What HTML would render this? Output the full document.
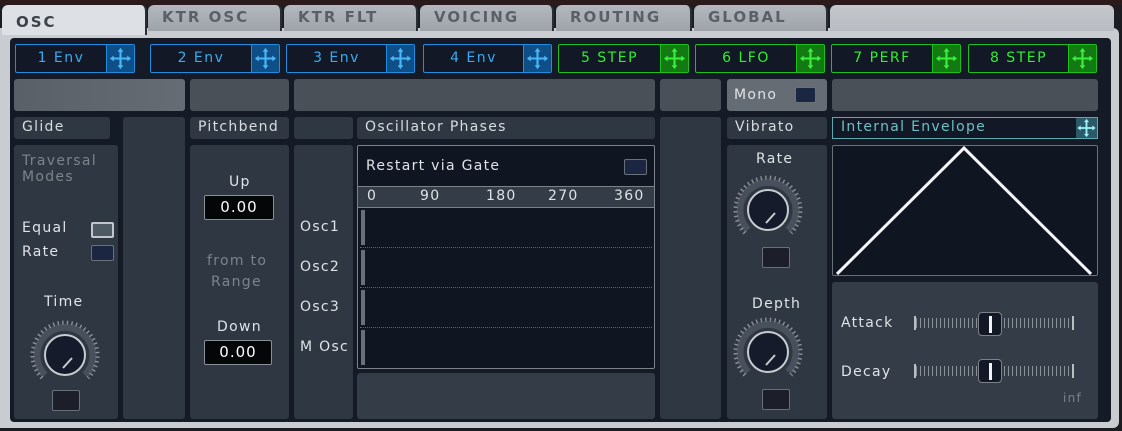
<!DOCTYPE html>
<html><head><meta charset="utf-8"><style>
*{margin:0;padding:0;box-sizing:border-box}
body{width:1122px;height:431px;background:#1b1d22;position:relative;overflow:hidden;font-family:"DejaVu Sans","Liberation Sans",sans-serif;}
.a{position:absolute}
.tab{position:absolute;top:5px;height:26px;background:linear-gradient(#b4b8be,#9ea3aa);border-radius:6px 6px 0 0;color:#5a6068;font-weight:bold;font-size:15px;letter-spacing:2px;padding:3px 0 0 14px;border-right:2px solid #2a2e34}
.p{position:absolute;background:#2f3742;border-radius:3px}
.lbl{position:absolute;background:#2f3742;border-radius:3px;color:#d8dce0;font-size:14px;letter-spacing:1.3px;padding:2px 0 0 8px}
.mod{position:absolute;top:44px;height:29px;border:1px solid;border-radius:2px;background:#121826;font-size:14px;letter-spacing:1.5px;text-align:center;line-height:27px}
.mod .ic{position:absolute;right:0;top:0;width:28px;height:27px}
.b{border-color:#1e8ce0;color:#3aaaf0}.b .ic{background:#0f4f88;border-left:1px solid #1e8ce0}
.g{border-color:#1cc01c;color:#2ef02e}.g .ic{background:#137a13;border-left:1px solid #1cc01c}
.t{color:#dfe3e7;font-size:14px;letter-spacing:1.3px;position:absolute}
.box{position:absolute;background:#050608;border:1px solid #8a9098;border-radius:2px;color:#fff;font-size:15px;letter-spacing:1px;text-align:center;line-height:22px}
.sq{position:absolute;width:28px;height:21px;background:#1c1f2a;border:1px solid #6a7078;border-radius:2px}
</style></head><body>
<div class="a" style="left:0;top:0;width:1122px;height:5px;background:#2a1a1c"></div>
<div class="a" style="left:0;top:28px;width:1119px;height:400px;background:#c9cdd2;border-radius:0 6px 6px 0"></div>
<div class="tab" style="left:2px;width:145px;height:30px;background:#dde0e4;color:#3c424a;padding-top:8px">OSC</div>
<div class="tab" style="left:148px;width:134px">KTR OSC</div>
<div class="tab" style="left:284px;width:134px">KTR FLT</div>
<div class="tab" style="left:420px;width:134px">VOICING</div>
<div class="tab" style="left:556px;width:136px">ROUTING</div>
<div class="tab" style="left:694px;width:134px">GLOBAL</div>
<div class="tab" style="left:830px;width:284px;background:linear-gradient(#c4c8cd,#b8bcc2);border-right:none"></div>
<div class="a" style="left:10px;top:38px;width:1101px;height:384px;background:#151b26;border-radius:4px"></div>

<svg width="0" height="0" style="position:absolute"><defs>
<g id="mv"><path d="M0 -9V9M-9 0H9" stroke="currentColor" stroke-width="2.2"/><path d="M0 -11l-3 4h6zM0 11l-3 -4h6zM-11 0l4 -3v6zM11 0l-4 -3v6z" fill="currentColor"/></g>
<g id="knob">
<path d="M-20 20A28 28 0 1 1 20 20" fill="none" stroke="#47505b" stroke-width="7"/>
<path d="M-23 23A32.5 32.5 0 1 1 23 23" fill="none" stroke="#8a9199" stroke-width="4" stroke-dasharray="1.4 3.2"/>
<circle r="20" fill="#151b2a" stroke="#c8ccd0" stroke-width="2"/>
<path d="M-2 13L7 3" stroke="#c8ccd0" stroke-width="2"/>
</g></defs></svg>

<div class="mod b" style="left:15px;width:120px"><span style="margin-right:28px">1 Env</span><svg class="ic" viewBox="-14 -14 28 28" style="color:#4ab6f8"><use href="#mv"/></svg></div>
<div class="mod b" style="left:150px;width:130px"><span style="margin-right:28px">2 Env</span><svg class="ic" viewBox="-14 -14 28 28" style="color:#4ab6f8"><use href="#mv"/></svg></div>
<div class="mod b" style="left:286px;width:129px"><span style="margin-right:28px">3 Env</span><svg class="ic" viewBox="-14 -14 28 28" style="color:#4ab6f8"><use href="#mv"/></svg></div>
<div class="mod b" style="left:423px;width:129px"><span style="margin-right:28px">4 Env</span><svg class="ic" viewBox="-14 -14 28 28" style="color:#4ab6f8"><use href="#mv"/></svg></div>
<div class="mod g" style="left:558px;width:131px"><span style="margin-right:28px">5 STEP</span><svg class="ic" viewBox="-14 -14 28 28" style="color:#3af03a"><use href="#mv"/></svg></div>
<div class="mod g" style="left:695px;width:130px"><span style="margin-right:28px">6 LFO</span><svg class="ic" viewBox="-14 -14 28 28" style="color:#3af03a"><use href="#mv"/></svg></div>
<div class="mod g" style="left:831px;width:130px"><span style="margin-right:28px">7 PERF</span><svg class="ic" viewBox="-14 -14 28 28" style="color:#3af03a"><use href="#mv"/></svg></div>
<div class="mod g" style="left:968px;width:129px"><span style="margin-right:28px">8 STEP</span><svg class="ic" viewBox="-14 -14 28 28" style="color:#3af03a"><use href="#mv"/></svg></div>

<div class="p" style="left:14px;top:79px;width:171px;height:32px;background:linear-gradient(90deg,#5a6068,#666c74)"></div>
<div class="p" style="left:190px;top:79px;width:99px;height:32px;background:#4a5058"></div>
<div class="p" style="left:294px;top:79px;width:361px;height:32px;background:#4a5058"></div>
<div class="p" style="left:660px;top:79px;width:61px;height:32px;background:#4a5058"></div>
<div class="p" style="left:727px;top:79px;width:100px;height:32px;background:#666c74"><span class="t" style="left:7px;top:8px">Mono</span><div class="sq" style="left:68px;top:8px;width:21px;height:16px;background:#1b2742"></div></div>
<div class="p" style="left:832px;top:79px;width:266px;height:32px;background:#4a5058"></div>

<div class="lbl" style="left:14px;top:117px;width:96px;height:22px">Glide</div>
<div class="p" style="left:123px;top:117px;width:62px;height:302px"></div>
<div class="lbl" style="left:190px;top:117px;width:99px;height:22px">Pitchbend</div>
<div class="p" style="left:294px;top:117px;width:59px;height:22px"></div>
<div class="lbl" style="left:357px;top:117px;width:298px;height:22px">Oscillator Phases</div>
<div class="p" style="left:660px;top:117px;width:61px;height:302px"></div>
<div class="lbl" style="left:727px;top:117px;width:100px;height:22px">Vibrato</div>
<div class="a" style="left:832px;top:117px;width:266px;height:22px;border:1px solid #5aa8b0;background:#121826;color:#6cc0c4;font-size:14px;letter-spacing:1.3px;padding:1px 0 0 8px">Internal Envelope<svg style="position:absolute;right:0;top:0;width:21px;height:20px;background:#2a5a68;color:#9ef0f8" viewBox="-12 -12 24 24"><use href="#mv"/></svg></div>

<div class="p" style="left:14px;top:145px;width:104px;height:274px">
<div class="t" style="left:8px;top:8px;color:#7c838b">Traversal<br>Modes</div>
<div class="t" style="left:8px;top:75px">Equal</div><div class="sq" style="left:77px;top:77px;width:23px;height:16px;background:#4e5a64;border:2px solid #c0c6cc"></div>
<div class="t" style="left:8px;top:99px">Rate</div><div class="sq" style="left:77px;top:100px;width:23px;height:16px;background:#1b2742"></div>
<div class="t" style="left:30px;top:149px">Time</div>
<svg class="a" style="left:11px;top:170px" width="80" height="80" viewBox="-40 -40 80 80"><use href="#knob"/></svg>
<div class="sq" style="left:38px;top:245px"></div>
</div>

<div class="p" style="left:190px;top:145px;width:99px;height:274px">
<div class="t" style="left:39px;top:29px">Up</div>
<div class="box" style="left:14px;top:50px;width:70px;height:25px">0.00</div>
<div class="t" style="left:17px;top:108px;color:#7c838b">from to</div>
<div class="t" style="left:21px;top:129px;color:#7c838b">Range</div>
<div class="t" style="left:27px;top:174px">Down</div>
<div class="box" style="left:14px;top:195px;width:68px;height:25px">0.00</div>
</div>

<div class="p" style="left:294px;top:145px;width:59px;height:274px">
<div class="t" style="left:6px;top:74px">Osc1</div>
<div class="t" style="left:6px;top:114px">Osc2</div>
<div class="t" style="left:6px;top:154px">Osc3</div>
<div class="t" style="left:6px;top:194px">M Osc</div>
</div>

<div class="a" style="left:357px;top:145px;width:298px;height:224px;background:#101522;border:1px solid #7c8288;border-radius:2px">
<div class="t" style="left:8px;top:12px">Restart via Gate</div>
<div class="sq" style="left:266px;top:13px;width:23px;height:16px;background:#1b2742"></div>
<div class="a" style="left:0;top:40px;width:296px;height:22px;background:#343c47;border-top:1px solid #7c8288;border-bottom:1px solid #7c8288;color:#dfe3e7;font-size:14px;letter-spacing:1.3px">
<span class="a" style="left:9px;top:1px">0</span><span class="a" style="left:62px;top:1px">90</span><span class="a" style="left:128px;top:1px">180</span><span class="a" style="left:190px;top:1px">270</span><span class="a" style="left:256px;top:1px">360</span></div>
<div class="a" style="left:3px;top:64px;width:4px;height:35px;background:#6a7078"></div>
<div class="a" style="left:3px;top:104px;width:4px;height:35px;background:#6a7078"></div>
<div class="a" style="left:3px;top:144px;width:4px;height:35px;background:#6a7078"></div>
<div class="a" style="left:3px;top:184px;width:4px;height:35px;background:#6a7078"></div>
<div class="a" style="left:2px;top:101px;width:292px;border-top:1px dotted #5a6068"></div>
<div class="a" style="left:2px;top:141px;width:292px;border-top:1px dotted #5a6068"></div>
<div class="a" style="left:2px;top:181px;width:292px;border-top:1px dotted #5a6068"></div>
</div>
<div class="p" style="left:357px;top:373px;width:298px;height:46px;background:#343c47"></div>

<div class="p" style="left:727px;top:145px;width:100px;height:274px">
<div class="t" style="left:29px;top:6px">Rate</div>
<svg class="a" style="left:1px;top:25px" width="80" height="80" viewBox="-40 -40 80 80"><use href="#knob"/></svg>
<div class="sq" style="left:35px;top:102px"></div>
<div class="t" style="left:25px;top:151px">Depth</div>
<svg class="a" style="left:1px;top:167px" width="80" height="80" viewBox="-40 -40 80 80"><use href="#knob"/></svg>
<div class="sq" style="left:35px;top:244px"></div>
</div>

<div class="a" style="left:832px;top:145px;width:266px;height:131px;background:#101522;border:1px solid #6a7078;border-radius:2px">
<svg width="264" height="129" style="position:absolute;left:0;top:0"><path d="M4 128L131 2L258 128" fill="none" stroke="#f4f6f8" stroke-width="3"/></svg>
</div>
<div class="p" style="left:832px;top:282px;width:266px;height:137px;background:#343c47">
<div class="t" style="left:9px;top:33px">Attack</div>
<div class="t" style="left:9px;top:82px">Decay</div>
<div class="a" style="left:82px;top:34px;width:160px;height:14px;border-left:2px solid #b8bec4;border-right:2px solid #b8bec4;background:repeating-linear-gradient(90deg,#8a9098 0 1px,transparent 1px 4px);background-size:100% 10px;background-repeat:no-repeat;background-position:0 2px"></div>
<div class="a" style="left:146px;top:30px;width:24px;height:24px;background:#121826;border:1px solid #7c8288;border-radius:4px"><div class="a" style="left:10px;top:3px;width:3px;height:17px;background:#f0f2f4"></div></div>
<div class="a" style="left:82px;top:82px;width:160px;height:14px;border-left:2px solid #b8bec4;border-right:2px solid #b8bec4;background:repeating-linear-gradient(90deg,#8a9098 0 1px,transparent 1px 4px);background-size:100% 10px;background-repeat:no-repeat;background-position:0 2px"></div>
<div class="a" style="left:146px;top:77px;width:24px;height:24px;background:#121826;border:1px solid #7c8288;border-radius:4px"><div class="a" style="left:10px;top:3px;width:3px;height:17px;background:#f0f2f4"></div></div>
<div class="t" style="left:231px;top:109px;color:#7c838b;font-size:12px">inf</div>
</div>
</body></html>
